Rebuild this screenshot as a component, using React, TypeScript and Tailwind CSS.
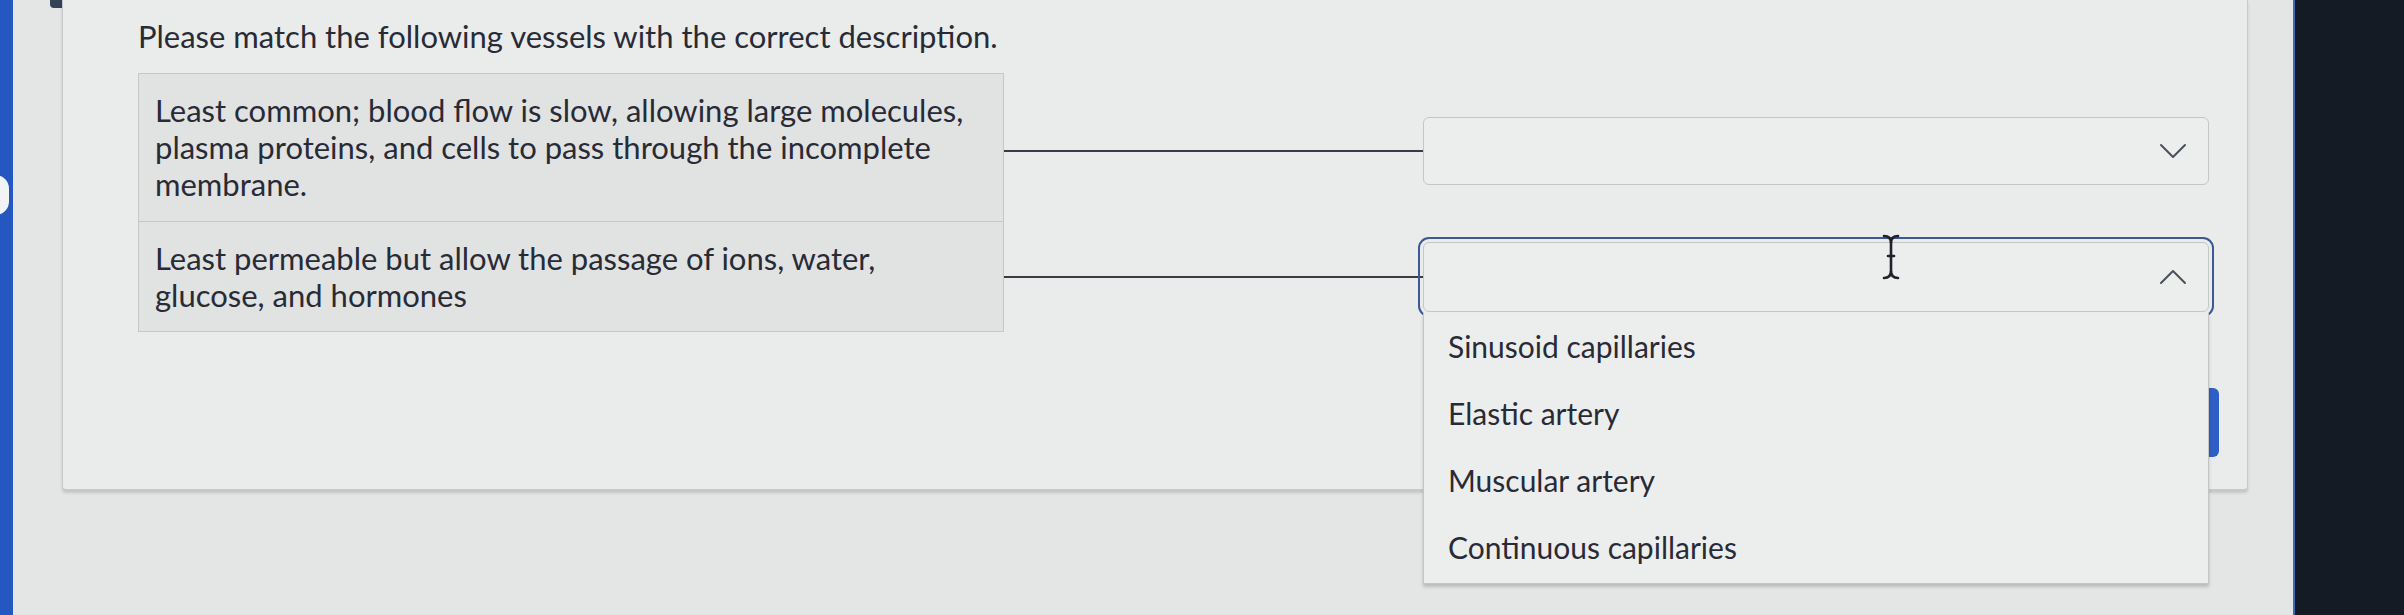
const rows = [
  {
    text: "Least common; blood flow is slow, allowing large molecules, plasma proteins, and cells to pass through the incomplete membrane.",
    open: false,
  },
  {
    text: "Least permeable but allow the passage of ions, water, glucose, and hormones",
    open: true,
  },
];

const options = ["Sinusoid capillaries", "Elastic artery", "Muscular artery", "Continuous capillaries"];

function IBeam() {
  return (
    <svg width="18" height="46" viewBox="0 0 18 46" className="absolute left-[458px] top-[-9px] z-20">
      <g fill="none" stroke="#1f2229" strokeWidth="2.6" strokeLinecap="round">
        <path d="M2 2 Q9 2 9 9 Q9 2 16 2" />
        <path d="M9 9 V37" />
        <path d="M2 44 Q9 44 9 37 Q9 44 16 44" />
        <path d="M6 22 H12" />
      </g>
    </svg>
  );
}

function Chevron({ up }: { up: boolean }) {
  return (
    <svg width="28" height="16" viewBox="0 0 28 16" fill="none" stroke="#4c5059" strokeWidth="2" strokeLinecap="round" strokeLinejoin="round">
      <path d={up ? "M2 14 L14 2 L26 14" : "M2 2 L14 14 L26 2"} />
    </svg>
  );
}

function Select({ open }: { open: boolean }) {
  return (
    <div
      className={`relative flex w-[786px] shrink-0 items-center justify-end rounded-md border border-[#c3c5c7] bg-[#eceeed] pr-[21px] ${
        open ? "h-[70px] outline-2 outline-offset-[3px] outline-[#3b5899]" : "mt-[6px] h-[68px]"
      }`}
    >
      <Chevron up={open} />
      {open && (
        <>
          <IBeam />
          <ul className="absolute left-[-1px] right-[-1px] top-[calc(100%+2px)] z-10 border border-t-0 border-[#c3c5c7] bg-[#eceeed] pb-[2px] pl-[24px] text-[30px] leading-[67px] shadow-[0_3px_3px_rgba(0,0,0,0.18)]">
            {options.map((o) => (
              <li key={o}>{o}</li>
            ))}
          </ul>
        </>
      )}
    </div>
  );
}

export default function App() {
  return (
    <div className="flex h-[615px] w-[2404px] overflow-hidden bg-[#e4e6e5] font-['Lato','Open_Sans',sans-serif] text-[#282b36]">
      <div className="relative w-[13px] shrink-0 bg-[#2557c0]">
        <div className="absolute left-[-18px] top-[175px] h-[40px] w-[27px] rounded-full bg-[#f2f3f4]" />
      </div>

      <div className="relative flex-1 pl-[49px] pr-[45px]">
        <div className="absolute left-[37px] top-0 h-[8px] w-[95px] rounded-b-sm bg-[#334257]" />
        <div className="relative h-[490px] rounded-b-sm border-x border-b border-[#c8c9cc] bg-[#eaeceb] pl-[75px] pr-[38px] pt-[18px] shadow-[0_3px_3px_rgba(0,0,0,0.14)]">
          <h1 className="text-[31px] leading-[36px]">Please match the following vessels with the correct description.</h1>

          <div className="mt-[19px]">
            {rows.map((r, i) => (
              <div key={i} className="flex items-center">
                <div
                  className={`w-[866px] shrink-0 border border-[#c6c7ca] bg-[#e1e2e2] pl-4 pr-[26px] text-[31px] leading-[37px] ${
                    i === 0 ? "py-[18px]" : "border-t-0 pb-[17px] pt-[18px]"
                  }`}
                >
                  {r.text}
                </div>
                <div className={`h-[2px] flex-1 bg-[#3a3c45] ${i === 0 ? "mt-[6px]" : ""}`} />
                <Select open={r.open} />
              </div>
            ))}
          </div>

          <div className="absolute right-[28px] top-[388px] h-[69px] w-[160px] rounded-md bg-[#2f5fc4]" />
        </div>
      </div>

      <div className="w-[111px] shrink-0 border-l-2 border-[#4068b8] bg-[#151b24]" />
    </div>
  );
}
